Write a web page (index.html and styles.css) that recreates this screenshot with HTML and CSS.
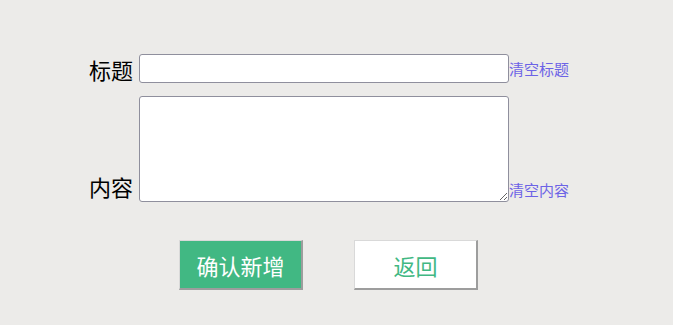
FILE: index.html
```html
<!DOCTYPE html>
<html lang="zh">
<head>
<meta charset="utf-8">
<title>新增</title>
<link rel="stylesheet" href="styles.css">
</head>
<body>
<div class="form">
  <div class="row row-title">
    <span class="label">标题</span>
    <input class="field" type="text">
    <a class="clear" href="#">清空标题</a>
  </div>
  <div class="row row-content">
    <span class="label">内容</span>
    <textarea class="area"></textarea>
    <a class="clear" href="#">清空内容</a>
  </div>
  <div class="actions">
    <button class="btn btn-ok">确认新增</button>
    <button class="btn btn-back">返回</button>
  </div>
</div>
</body>
</html>
```
FILE: styles.css
```css
html, body {
  margin: 0;
  padding: 0;
  background: #ecebe9;
}
.form {
  padding: 54px 0 0 89px;
  font-family: "Noto Sans CJK SC", sans-serif;
}
.row {
  display: flex;
}
.row-title {
  align-items: center;
}
.row-content {
  align-items: flex-end;
  margin-top: 13px;
}
.label {
  font-size: 22px;
  line-height: 1;
  width: 44px;
  margin-right: 6px;
  color: #000;
  font-family: "Noto Sans CJK SC", serif;
}
.row-content .label {
  margin-bottom: 5px;
}
.field, .area {
  box-sizing: border-box;
  width: 370px;
  border: 1px solid #8f8f9d;
  border-radius: 3px;
  background: #fff;
  margin: 0;
  padding: 2px 4px;
}
.field {
  height: 29px;
}
.area {
  height: 106px;
  resize: both;
  display: block;
}
.clear {
  font-size: 15px;
  line-height: 1;
  color: #6c63e6;
  text-decoration: none;
}
.row-content .clear {
  margin-bottom: 5px;
}
.actions {
  display: flex;
  gap: 51px;
  margin-top: 38px;
  padding-left: 90px;
}
.btn {
  box-sizing: border-box;
  width: 124px;
  height: 50px;
  font-family: "Noto Sans CJK SC", sans-serif;
  font-size: 22px;
  border-style: solid;
  border-width: 1px 2px 2px 1px;
  border-color: #d9d9d9 #9d9d9d #9d9d9d #d9d9d9;
  padding: 0;
  margin: 0;
  cursor: pointer;
}
.btn-ok {
  background: #41b883;
  color: #fff;
}
.btn-back {
  background: #fff;
  color: #41b883;
}
```
